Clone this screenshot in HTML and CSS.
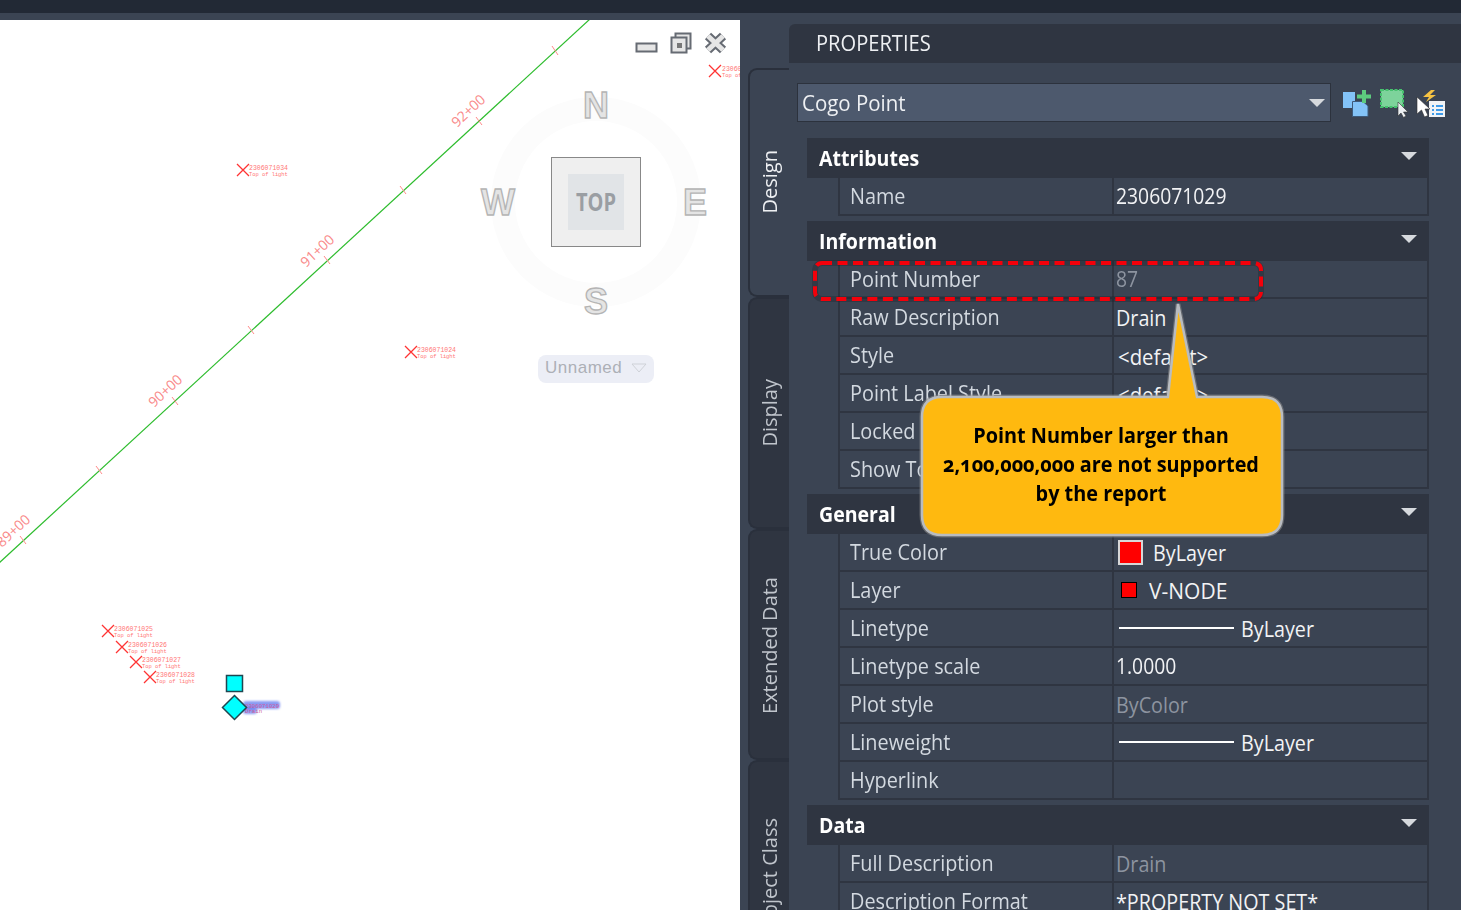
FILE: index.html
```html
<!DOCTYPE html>
<html lang="en">
<head>
<meta charset="utf-8">
<title>Cogo Point Properties</title>
<link rel="stylesheet" href="styles.css">
</head>
<body>
<div class="topbar"></div>
<div class="main">
  <div class="canvas">
    <svg class="drawing" width="740" height="890" viewBox="0 20 740 890">
      <g class="ring"><circle cx="596" cy="202" r="93"/></g>
      <line class="align" x1="-2" y1="564" x2="590" y2="19"/>
      <g class="tick">
        <path d="M552 46 558 55M476 117 482 125M400 186 406 194M324 256 330 264M248 326 254 334M172 397 178 405M96 466 102 474M20 536 26 544"/>
      </g>
      <g class="station">
        <text transform="translate(457 128) rotate(-43)">92+00</text>
        <text transform="translate(306 268) rotate(-43)">91+00</text>
        <text transform="translate(154 408) rotate(-43)">90+00</text>
        <text transform="translate(2 548) rotate(-43)">89+00</text>
      </g>
      <g class="cross">
        <path d="M237 164 249 176M249 164 237 176M405 346 417 358M417 346 405 358M102 625 114 637M114 625 102 637M116 641 128 653M128 641 116 653M130 656 142 668M142 656 130 668M144 671 156 683M156 671 144 683M709 65 721 77M721 65 709 77"/>
      </g>
      <g class="pt">
        <text x="249" y="169.500">2306071034</text><text class="pt2" x="249" y="175.500">Top of light</text>
        <text x="417" y="351.500">2306071024</text><text class="pt2" x="417" y="357.500">Top of light</text>
        <text x="114" y="630.500">2306071025</text><text class="pt2" x="114" y="636.500">Top of light</text>
        <text x="128" y="646.500">2306071026</text><text class="pt2" x="128" y="652.500">Top of light</text>
        <text x="142" y="661.500">2306071027</text><text class="pt2" x="142" y="667.500">Top of light</text>
        <text x="156" y="676.500">2306071028</text><text class="pt2" x="156" y="682.500">Top of light</text>
        <text x="722" y="71">2306071</text><text class="pt2" x="722" y="77">Top of</text>
      </g>
      <rect class="glow" x="243" y="701" width="37" height="8" rx="3"/>
      <rect class="glow" x="243" y="707" width="14" height="7" rx="3"/>
      <g class="pt selected">
        <text x="245" y="708">2306071029</text><text class="pt2" x="245" y="713">Drain</text>
      </g>
      <rect class="grip" x="226.500" y="675.500" width="16" height="16"/>
      <path class="grip" d="M234.500 695.500 246.500 707.500 234.500 719.500 222.500 707.500Z"/>
      <g class="dir">
        <text x="596" y="118">N</text>
        <text x="498" y="215">W</text>
        <text x="695" y="215">E</text>
        <text x="596" y="314">S</text>
      </g>
      <rect class="cube" x="551.500" y="157.500" width="89" height="89"/>
      <rect class="face" x="568" y="174" width="56" height="56"/>
      <text class="top" x="596" y="211">TOP</text>
      <rect class="ucs" x="538" y="355" width="116" height="28" rx="8"/>
      <text class="ucs-t" x="545" y="373">Unnamed</text>
      <path class="ucs-a" d="M632 364H646L639 372Z"/>
      <g class="win">
        <rect x="636.500" y="43.500" width="20" height="8"/>
        <rect x="675.500" y="33.500" width="15" height="15"/>
        <rect x="671.500" y="37.500" width="15" height="15"/>
        <rect class="win-dot" x="677" y="43" width="5" height="5"/>
        <path class="win-x" d="M708 36 723 50M723 36 708 50"/>
        <path class="win-x2" d="M708 36 723 50M723 36 708 50"/>
      </g>
    </svg>
  </div>
  <div class="panel">
    <div class="sidetabs">
      <div class="stab active"><span>Design</span></div>
      <div class="stab"><span>Display</span></div>
      <div class="stab"><span>Extended Data</span></div>
      <div class="stab last"><span>Object Class</span></div>
    </div>
    <div class="content">
      <div class="title"><span class="t ts">PROPERTIES</span></div>
      <div class="toolbar">
        <div class="select"><span class="t tc">Cogo Point</span><i class="caret"></i></div>
        <svg class="tool" width="30" height="31" viewBox="0 0 30 31">
          <rect x="0" y="5" width="12" height="16" fill="#83c3f7"/>
          <path d="M9.500 14.500H20L25 19V29.500H9.500Z" fill="#83c3f7" stroke="#3d5a7a"/>
          <path d="M14 9.500H28M21 3V16" stroke="#5dcb7e" stroke-width="4"/>
        </svg>
        <svg class="tool t2" width="28" height="31" viewBox="0 0 28 31">
          <rect x="1" y="3" width="22" height="17" fill="#7dd39b" stroke="#46c26f" stroke-width="2" stroke-dasharray="3 1.500"/>
          <path d="M18 15V29L21 26 23.500 30.500 26 29 23.500 25H28Z" fill="#eceff2" stroke="#333" stroke-width=".6"/>
        </svg>
        <svg class="tool t3" width="30" height="31" viewBox="0 0 30 31">
          <rect x="13" y="14" width="16" height="16" fill="#f1f3f5"/>
          <path d="M15 3 7 10H13L10 15 20 8H14L19 3Z" fill="#f5c243"/>
          <path d="M16 19H18M20 19H27M16 23H18M20 23H27M16 27H18M20 27H27" stroke="#3f9be8" stroke-width="2"/>
          <path d="M1 10V27L5.500 23 8.500 30 12 28.500 9 22H14Z" fill="#fff" stroke="#333" stroke-width=".6"/>
        </svg>
      </div>

      <section class="group">
        <h3 class="ghead"><span class="t th">Attributes</span><i class="caret"></i></h3>
        <div class="rows">
          <div class="row"><div class="k"><span class="t">Name</span></div><div class="v"><span class="t tn">2306071029</span></div></div>
        </div>
      </section>

      <section class="group">
        <h3 class="ghead"><span class="t th">Information</span><i class="caret"></i></h3>
        <div class="rows">
          <div class="row"><div class="k"><span class="t">Point Number</span></div><div class="v off"><span class="t tn">87</span></div></div>
          <div class="row"><div class="k"><span class="t">Raw Description</span></div><div class="v"><span class="t">Drain</span></div></div>
          <div class="row"><div class="k"><span class="t">Style</span></div><div class="v"><span class="t td">&lt;default&gt;</span></div></div>
          <div class="row"><div class="k"><span class="t">Point Label Style</span></div><div class="v"><span class="t td">&lt;default&gt;</span></div></div>
          <div class="row"><div class="k"><span class="t">Locked</span></div><div class="v"><span class="t">No</span></div></div>
          <div class="row"><div class="k"><span class="t">Show Tooltips</span></div><div class="v"><span class="t">Yes</span></div></div>
        </div>
      </section>

      <section class="group">
        <h3 class="ghead"><span class="t th">General</span><i class="caret"></i></h3>
        <div class="rows">
          <div class="row"><div class="k"><span class="t">True Color</span></div><div class="v"><i class="swatch big"></i><span class="t">ByLayer</span></div></div>
          <div class="row"><div class="k"><span class="t">Layer</span></div><div class="v"><i class="swatch"></i><span class="t tw">V-NODE</span></div></div>
          <div class="row"><div class="k"><span class="t">Linetype</span></div><div class="v"><i class="ln"></i><span class="t">ByLayer</span></div></div>
          <div class="row"><div class="k"><span class="t">Linetype scale</span></div><div class="v"><span class="t tn">1.0000</span></div></div>
          <div class="row"><div class="k"><span class="t">Plot style</span></div><div class="v off"><span class="t">ByColor</span></div></div>
          <div class="row"><div class="k"><span class="t">Lineweight</span></div><div class="v"><i class="ln"></i><span class="t">ByLayer</span></div></div>
          <div class="row"><div class="k"><span class="t">Hyperlink</span></div><div class="v"></div></div>
        </div>
      </section>

      <section class="group">
        <h3 class="ghead"><span class="t th">Data</span><i class="caret"></i></h3>
        <div class="rows">
          <div class="row"><div class="k"><span class="t">Full Description</span></div><div class="v off"><span class="t">Drain</span></div></div>
          <div class="row"><div class="k"><span class="t">Description Format</span></div><div class="v"><span class="t">*PROPERTY NOT SET*</span></div></div>
        </div>
      </section>
    </div>
  </div>
</div>

<svg class="highlight" width="453" height="43" viewBox="0 0 453 43">
  <rect class="hl-shadow" x="3" y="3" width="446" height="36" rx="7"/>
  <rect class="hl-dash" x="3" y="3" width="446" height="36" rx="7"/>
</svg>
<div class="callout">
  <svg class="bubble" width="372" height="246" viewBox="0 0 372 246">
    <path class="bubble-edge" d="M26 99H252L262 6 281 99H346Q366 99 366 119V217Q366 237 346 237H26Q6 237 6 217V119Q6 99 26 99Z"/>
    <path class="bubble-fill" d="M26 99H252L262 6 281 99H346Q366 99 366 119V217Q366 237 346 237H26Q6 237 6 217V119Q6 99 26 99Z"/>
  </svg>
  <p class="callout-text">Point Number larger than<br>2,100,000,000 are not supported<br>by the report</p>
</div>
</body>
</html>
```
FILE: styles.css
```css
* { box-sizing: border-box; }
html, body { margin: 0; height: 910px; overflow: hidden; }
body { position: relative; background: #3b4453; font-family: "Open Sans", "Noto Sans", sans-serif; }

.topbar { height: 13px; background: #222935; }
.main { display: flex; height: 897px; padding-top: 7px; overflow: hidden; }

.canvas { flex: 0 0 740px; height: 890px; background: #fff; overflow: hidden; }
.drawing { display: block; }
.ring circle { fill: none; stroke: #fcfcfc; stroke-width: 24; }
.align { stroke: #2cbc2c; stroke-width: 1.2; }
.tick path { stroke: #ff8a8a; stroke-width: 1; fill: none; }
.station text { font: 14px "Open Sans", sans-serif; fill: #f98a8a; }
.cross path { stroke: #f33; stroke-width: 1.3; fill: none; }
.pt text { font: 6.500px "Liberation Mono", monospace; fill: #f77; }
.pt .pt2 { font-size: 5.400px; }
.pt.selected text { font-size: 5.700px; fill: #d05a9a; }
.glow { fill: #5a72ee; opacity: .7; filter: blur(1px); }
.grip { fill: #0ff; stroke: #1f4650; stroke-width: 1.500; }
.dir text { font: bold 36px "Liberation Sans", sans-serif; text-anchor: middle; fill: #e4e4e4; stroke: #b4b4b4; stroke-width: 1.300; }
.cube { fill: #efefef; stroke: #888; }
.face { fill: #e1e4e7; }
.top { font: bold 25px "Open Sans", sans-serif; fill: #9a9ea3; text-anchor: middle; transform-box: fill-box; transform-origin: center; transform: scaleX(.8); }
.ucs { fill: #eceef6; }
.ucs-t { font: 17px "Liberation Sans", sans-serif; fill: #adb0b6; letter-spacing: .5px; }
.ucs-a { fill: none; stroke: #cfd2d8; }
.win rect { fill: #e6e6e6; stroke: #666b73; stroke-width: 2; }
.win .win-dot { fill: #777; stroke: none; }
.win-x { stroke: #666b73; stroke-width: 9; fill: none; }
.win-x2 { stroke: #e6e6e6; stroke-width: 5; fill: none; }

.panel { flex: 1; display: flex; padding-left: 8px; min-width: 0; }
.sidetabs { flex: 0 0 41px; margin-top: 48px; display: flex; flex-direction: column; }
.stab { flex: 0 0 232px; display: flex; align-items: flex-start; justify-content: center; background: #2f3541; border: 2px solid #2a303c; border-right: 0; border-radius: 9px 0 0 9px; color: #c0c5cc; font-size: 20px; padding-top: 80px; }
.stab span { writing-mode: vertical-rl; transform: rotate(180deg); white-space: nowrap; }
.stab.active { flex-basis: 229px; background: #3b4453; color: #eef0f3; }
.stab:nth-child(3) { flex-basis: 231px; padding-top: 46px; }
.stab.last { padding-top: 56px; }

.content { flex: 1; min-width: 0; }
.t { display: inline-block; white-space: nowrap; transform: scaleX(.945); transform-origin: left center; }
.v .t { transform: translateY(1px) scaleX(.94); }
.v .tn { transform: translateY(0) scaleX(.92); }
.v .tw { transform: translateY(1px) scaleX(1); }
.v .td { transform: translate(2px, 2px) scaleX(.97); }
.t.ts { transform: scaleX(.958); }
.t.tc { transform: scaleX(.93); }
.t.th { transform: scaleX(.93); }
.title { height: 39px; margin-top: 4px; padding-left: 27px; background: #2f3541; border-radius: 6px 0 0 0; color: #eef0f3; font-size: 21px; line-height: 39px; }
.toolbar { display: flex; align-items: center; height: 39px; margin: 20px 0 16px 8px; }
.select { flex: 0 0 534px; height: 39px; display: flex; align-items: center; justify-content: space-between; padding: 0 5px 2px 4px; background: #4d596d; border: 1px solid #2c323d; color: #eef0f3; font-size: 22px; }
.tool { display: block; margin-left: 12px; flex: none; }
.tool.t2 { margin-left: 7px; }
.tool.t3 { margin-left: 8px; }
.caret { display: block; width: 0; height: 0; border: 8px solid transparent; border-top: 8px solid #d6d9dd; border-bottom: 0; flex: none; }
.select .caret { margin-top: 2px; }

.group { margin: 0 32px 5px 18px; }
.ghead { display: flex; align-items: center; justify-content: space-between; height: 40px; margin: 0; padding: 0 12px; background: #2f3541; color: #fff; font-size: 21px; font-weight: 700; }
.ghead .caret { margin-top: -4px; }
.rows { margin-left: 31px; border-left: 2px solid #2f3541; border-right: 2px solid #2f3541; }
.row { display: flex; height: 38px; border-bottom: 2px solid #2f3541; font-size: 21px; }
.k { flex: 0 0 274px; padding-left: 10px; color: #d3d9e0; border-right: 2px solid #2f3541; line-height: 36px; }
.v { flex: 1; display: flex; align-items: center; padding-left: 2px; color: #f2f3f5; line-height: 36px; }
.v.off { color: #8d94a0; }
.swatch { display: block; width: 16px; height: 16px; margin: 0 12px 0 5px; background: #f00; border: 1px solid #000; flex: none; }
.swatch.big { width: 25px; height: 25px; margin: 0 10px 0 2px; border: 2px solid #d7d7d7; }
.ln { display: block; width: 115px; height: 2px; margin: 0 7px 0 3px; background: #fff; flex: none; }

.highlight { position: absolute; left: 812px; top: 260px; }
.hl-shadow { fill: none; stroke: #20242c; stroke-width: 6; opacity: .35; }
.hl-dash { fill: none; stroke: #f4000a; stroke-width: 4; stroke-dasharray: 10 5.500; }
.callout { position: absolute; left: 916px; top: 298px; width: 372px; height: 246px; }
.bubble { position: absolute; left: 0; top: 0; }
.bubble-edge { fill: none; stroke: #8a8a8a; stroke-width: 5; opacity: .55; }
.bubble-fill { fill: #ffb90f; stroke: #b9bcc0; stroke-width: 2.500; }
.callout-text { position: absolute; left: 5px; right: 7px; top: 123px; margin: 0; text-align: center; color: #000; font: 700 21px/29px "Open Sans", sans-serif; font-variant-numeric: oldstyle-nums; white-space: nowrap; transform: scaleX(.945); }
```
